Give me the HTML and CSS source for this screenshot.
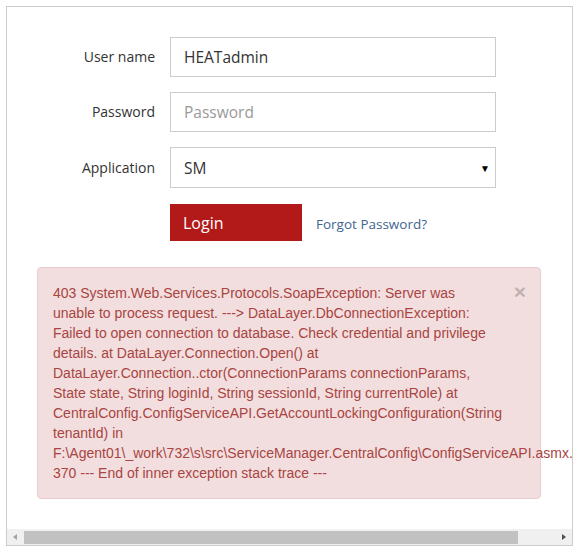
FILE: index.html
```html
<!DOCTYPE html>
<html>
<head>
<meta charset="utf-8">
<link rel="stylesheet" href="styles.css">
</head>
<body>
<div class="frame">
  <div class="content">
    <form class="form">
      <label class="label">User name</label>
      <div class="input">HEATadmin</div>
      <label class="label">Password</label>
      <div class="input placeholder">Password</div>
      <label class="label">Application</label>
      <div class="input select"><span>SM</span><span class="caret">▼</span></div>
      <div class="actions">
        <div class="btn">Login</div>
        <a class="link">Forgot Password?</a>
      </div>
    </form>
    <div class="alert">
      <span class="close">×</span>
      403 System.Web.Services.Protocols.SoapException: Server was unable to process request. ---&gt; DataLayer.DbConnectionException: Failed to open connection to database. Check credential and privilege details. at DataLayer.Connection.Open() at DataLayer.Connection..ctor(ConnectionParams connectionParams, State state, String loginId, String sessionId, String currentRole) at CentralConfig.ConfigServiceAPI.GetAccountLockingConfiguration(String tenantId) in F:\Agent01\_work\732\s\src\ServiceManager.CentralConfig\ConfigServiceAPI.asmx.cs:line 370 --- End of inner exception stack trace ---
    </div>
  </div>
  <div class="scrollbar">
    <span class="arrow-left"></span>
    <span class="thumb"></span>
    <span class="spacer"></span>
    <span class="arrow-right"></span>
  </div>
</div>
</body>
</html>
```

FILE: styles.css
```css
html, body {
  margin: 0;
  padding: 0;
  background: #fff;
}
body {
  padding: 6px;
  font-family: "Open Sans", "Liberation Sans", sans-serif;
}
.frame {
  width: 567px;
  height: 540px;
  box-sizing: border-box;
  border: 1px solid #cccccc;
  display: flex;
  flex-direction: column;
}
.content {
  flex: 1;
  overflow: hidden;
}
.form {
  display: grid;
  grid-template-columns: 148px 326px;
  column-gap: 15px;
  row-gap: 15px;
  align-items: center;
  padding-top: 30px;
  margin: 0;
}
.label {
  text-align: right;
  font-size: 14px;
  color: #333;
  margin-top: -1px;
}
.input {
  height: 40px;
  box-sizing: border-box;
  border: 1px solid #cccccc;
  padding: 0 13px;
  font-size: 15.5px;
  color: #333;
  display: flex;
  align-items: center;
}
.placeholder {
  color: #9a9a9a;
}
.select {
  height: 41px;
  justify-content: space-between;
  padding-right: 5px;
}
.caret {
  font-size: 10px;
  color: #000;
}
.actions {
  grid-column: 2;
  display: flex;
  align-items: center;
  margin-top: 1px;
}
.btn {
  width: 132px;
  height: 37px;
  box-sizing: border-box;
  background: #b21919;
  color: #fff;
  font-size: 16px;
  padding-left: 13px;
  display: flex;
  align-items: center;
}
.link {
  margin-left: 14px;
  font-size: 13.5px;
  color: #3f6591;
  margin-top: 2px;
}
.alert {
  margin: 26px 0 0 30px;
  width: 504px;
  box-sizing: border-box;
  background: #f2dede;
  border: 1px solid #ebccd1;
  border-radius: 4px;
  padding: 15px 35px 15px 15px;
  color: #a94442;
  font-family: "Liberation Sans", Arial, sans-serif;
  font-size: 14px;
  line-height: 20px;
}
.close {
  float: right;
  position: relative;
  top: -2px;
  right: -21px;
  font-size: 21px;
  font-weight: bold;
  line-height: 1;
  color: #000;
  opacity: 0.2;
}
.scrollbar {
  height: 16px;
  flex: none;
  background: #f0f0f0;
  display: flex;
  align-items: center;
}
.arrow-left {
  width: 0;
  height: 0;
  margin-left: 6px;
  border-top: 3.5px solid transparent;
  border-bottom: 3.5px solid transparent;
  border-right: 4px solid #a3a3a3;
}
.thumb {
  width: 494px;
  height: 13px;
  margin-left: 7px;
  background: #c1c1c1;
}
.spacer {
  flex: 1;
}
.arrow-right {
  width: 0;
  height: 0;
  margin-right: 6px;
  border-top: 3.5px solid transparent;
  border-bottom: 3.5px solid transparent;
  border-left: 4px solid #505050;
}
```
